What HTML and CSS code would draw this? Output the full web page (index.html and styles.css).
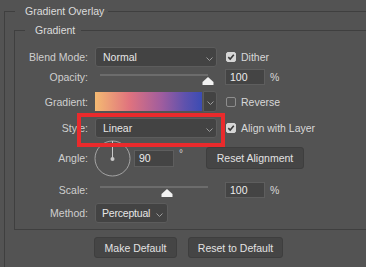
FILE: index.html
```html
<!DOCTYPE html>
<html lang="en">
<head>
  <meta charset="UTF-8" />
  <title>Gradient Overlay</title>
  <link rel="stylesheet" href="styles.css">
</head>
<body>

  <fieldset class="group">
    <legend class="group-title">Gradient Overlay</legend>

    <fieldset class="group inner">
      <legend class="group-title">Gradient</legend>

      <div class="form">
        <!-- Blend mode -->
        <span class="lbl">Blend Mode:</span>
        <div class="select wide">
          <span>Normal</span>
          <svg class="chev" width="7" height="4" viewBox="0 0 7 4"><path d="M0.5 0.5 L3.5 3.5 L6.5 0.5" /></svg>
        </div>
        <label class="check on"><span class="box"><svg width="8" height="8" viewBox="0 0 8 8"><path d="M1.3 4.2 L3.2 6 L6.8 1.8" /></svg></span>Dither</label>

        <!-- Opacity -->
        <span class="lbl">Opacity:</span>
        <svg class="slider" width="122" height="12" viewBox="0 0 122 12">
          <rect x="5" y="0" width="108" height="2" fill="#6c6c6c" />
          <path d="M113 3 L118.5 8 L118.5 11 L107.5 11 L107.5 8 Z" fill="#f2f2f2" />
        </svg>
        <div class="num"><span class="field">100</span><span class="unit">%</span></div>

        <!-- Gradient -->
        <span class="lbl">Gradient:</span>
        <div class="grad-pick">
          <span class="grad"></span>
          <span class="grad-arrow">
            <svg class="chev" width="7" height="4" viewBox="0 0 7 4"><path d="M0.5 0.5 L3.5 3.5 L6.5 0.5" /></svg>
          </span>
        </div>
        <label class="check"><span class="box"></span>Reverse</label>

        <!-- Style -->
        <span class="lbl">Style:</span>
        <div class="select wide">
          <span>Linear</span>
          <svg class="chev" width="7" height="4" viewBox="0 0 7 4"><path d="M0.5 0.5 L3.5 3.5 L6.5 0.5" /></svg>
        </div>
        <label class="check on"><span class="box"><svg width="8" height="8" viewBox="0 0 8 8"><path d="M1.3 4.2 L3.2 6 L6.8 1.8" /></svg></span>Align with Layer</label>

        <!-- Angle -->
        <span class="lbl">Angle:</span>
        <div class="angle-row">
          <svg class="dial" width="37" height="37" viewBox="0 0 37 37">
            <circle cx="18.5" cy="18.5" r="17.5" fill="none" stroke="#a4a4a4" stroke-width="1" />
            <line x1="18.5" y1="1" x2="18.5" y2="18" stroke="#c8c8c8" stroke-width="1" />
            <circle cx="18.5" cy="19" r="2" fill="#c8c8c8" />
          </svg>
          <span class="field">90</span>
          <span class="deg">°</span>
          <button class="btn reset-align">Reset Alignment</button>
        </div>

        <!-- Scale -->
        <span class="lbl">Scale:</span>
        <svg class="slider" width="122" height="12" viewBox="0 0 122 12">
          <rect x="5" y="0" width="108" height="2" fill="#6c6c6c" />
          <path d="M72 3 L77.5 8 L77.5 11 L66.5 11 L66.5 8 Z" fill="#f2f2f2" />
        </svg>
        <div class="num"><span class="field">100</span><span class="unit">%</span></div>

        <!-- Method -->
        <span class="lbl">Method:</span>
        <div class="select narrow">
          <span>Perceptual</span>
          <svg class="chev" width="7" height="4" viewBox="0 0 7 4"><path d="M0.5 0.5 L3.5 3.5 L6.5 0.5" /></svg>
        </div>
        <span></span>
      </div>
    </fieldset>

    <div class="actions">
      <button class="btn make-default">Make Default</button>
      <button class="btn reset-default">Reset to Default</button>
    </div>
  </fieldset>

  <!-- marcação vermelha em volta do Style -->
  <div class="highlight"></div>

</body>
</html>
```

FILE: styles.css
```css
body {
  margin: 0;
  background: #535353;
  font-family: 'Liberation Sans', Arial, sans-serif;
  font-size: 10.5px;
  color: #d4d4d4;
  overflow: hidden;
  position: relative;
  height: 267px;
}

.group {
  margin: 5px 0 0 4px;
  padding: 7px 0 20px 9px;
  width: 440px;
  border: 1px solid #3f3f3f;
  box-sizing: border-box;
}

.group-title {
  margin-left: 1px;
  padding: 0 4px 0 10px;
  line-height: 12px;
  color: #dcdcdc;
}

.group.inner {
  margin: 0;
  padding: 11px 0 6px 5px;
  width: 430px;
}

.group.inner .group-title {
  margin-left: 5px;
  padding: 0 6px 0 10px;
}

/* grade do formulário */
.form {
  display: grid;
  grid-template-columns: 75px 130px 1fr;
  grid-template-rows: 20px 20px 29px 24px 36px 27px 20px;
  align-items: center;
}

.lbl {
  text-align: right;
  padding-right: 7px;
  color: #cfcfcf;
}

.select {
  height: 20px;
  box-sizing: border-box;
  background: #434343;
  border: 1px solid #5c5c5c;
  border-radius: 3px;
  display: flex;
  align-items: center;
  justify-content: space-between;
  padding: 0 3px 0 7px;
  color: #e6e6e6;
}

.select.wide {
  width: 122px;
}

.select.narrow {
  width: 73px;
  padding: 0 4px 0 6px;
  letter-spacing: -0.2px;
}

.chev {
  margin-top: 3px;
}

.chev path {
  fill: none;
  stroke: #9c9c9c;
  stroke-width: 1;
}

.check {
  display: flex;
  align-items: center;
  gap: 5px;
  margin-left: 1px;
  color: #d8d8d8;
}

.check .box {
  width: 10px;
  height: 10px;
  box-sizing: border-box;
  border: 1px solid #8e8e8e;
  border-radius: 2px;
  display: flex;
  align-items: center;
  justify-content: center;
}

.check.on .box {
  background: #d6d6d6;
  border-color: #d6d6d6;
}

.check .box path {
  fill: none;
  stroke: #3a3a3a;
  stroke-width: 1.6;
}

.slider {
  display: block;
  margin-top: 5px;
}

.num {
  display: flex;
  align-items: center;
  gap: 5px;
}

.field {
  box-sizing: border-box;
  width: 40px;
  height: 16px;
  line-height: 14px;
  background: #444444;
  border: 1px solid #5e5e5e;
  padding-left: 4px;
  color: #ececec;
}

.unit {
  color: #d8d8d8;
}

.grad-pick {
  width: 122px;
  height: 21px;
  display: flex;
  gap: 1px;
}

.grad {
  flex: 1;
  margin: 1px 0;
  background: linear-gradient(to right, #f4ba72 0%, #e0737e 32%, #a05d9e 62%, #5f52ad 84%, #3b4cb4 100%);
}

.grad-arrow {
  width: 14px;
  box-sizing: border-box;
  background: #434343;
  border: 1px solid #5c5c5c;
  border-radius: 0 3px 3px 0;
  display: flex;
  align-items: center;
  justify-content: center;
}

.angle-row {
  grid-column: 2 / 4;
  display: flex;
  align-items: center;
  margin-left: -1px;
}

.dial {
  display: block;
}

.angle-row .field {
  height: 17px;
  line-height: 15px;
  margin-left: 3px;
}

.deg {
  align-self: flex-start;
  margin: 8px 0 0 5px;
  font-size: 10px;
}

.btn {
  height: 22px;
  box-sizing: border-box;
  background: #454545;
  border: 1px solid #3e3e3e;
  border-radius: 3px;
  font-family: inherit;
  font-size: 10.5px;
  color: #e2e2e2;
  padding: 0;
  cursor: pointer;
}

.reset-align {
  width: 98px;
  margin-left: 23px;
}

.actions {
  display: flex;
  gap: 11px;
  margin: 7px 0 0 80px;
}

.make-default {
  width: 83px;
  height: 21px;
}

.reset-default {
  width: 95px;
  height: 21px;
}

.highlight {
  position: absolute;
  left: 77px;
  top: 113px;
  width: 148px;
  height: 34px;
  box-sizing: border-box;
  border: 4px solid #ea2a2c;
}
```
